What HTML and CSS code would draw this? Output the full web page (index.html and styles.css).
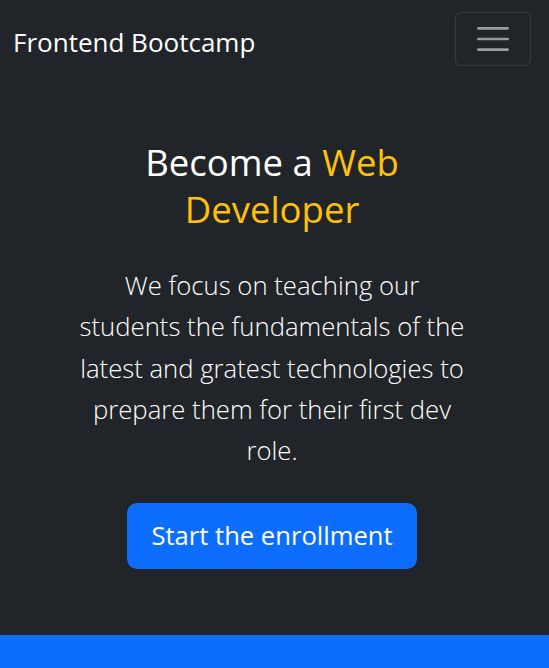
FILE: index.html
```html
<!DOCTYPE html>
<html lang="en">
<head>
<meta charset="utf-8">
<title>Frontend Bootcamp</title>
<link rel="stylesheet" href="styles.css">
</head>
<body>
<nav class="navbar">
  <a class="brand" href="#">Frontend Bootcamp</a>
  <button class="toggler" type="button" aria-label="Toggle navigation">
    <svg class="toggler-icon" viewBox="0 0 30 30" width="40" height="40" aria-hidden="true">
      <path d="M4 7h22M4 15h22M4 23h22" stroke="rgba(255,255,255,0.55)" stroke-width="2" stroke-linecap="round" fill="none"/>
    </svg>
  </button>
</nav>
<section class="hero">
  <h1 class="hero-title">Become a <span class="accent">Web Developer</span></h1>
  <p class="lead">We focus on teaching our students the fundamentals of the latest and gratest technologies to prepare them for their first dev role.</p>
  <a class="btn-primary" href="#">Start the enrollment</a>
</section>
<section class="next"></section>
</body>
</html>
```
FILE: styles.css
```css
* { box-sizing: border-box; }
html, body { margin: 0; padding: 0; }
body {
  background: #212529;
  color: #fff;
  font-family: "Open Sans", "Noto Sans", "Liberation Sans", sans-serif;
}
.navbar {
  display: flex;
  align-items: center;
  justify-content: space-between;
  padding: 12px 18px 9px 13px;
}
.brand {
  color: #fff;
  text-decoration: none;
  font-size: 26px;
  line-height: 1.5;
  font-weight: 400;
  padding-top: 6px;
}
.toggler {
  display: flex;
  align-items: center;
  justify-content: center;
  width: 76px;
  height: 54px;
  padding: 0;
  background: transparent;
  border: 1.33px solid rgba(255,255,255,0.1);
  border-radius: 6px;
}
.toggler-icon { display: block; }
.hero {
  text-align: center;
  padding: 64px 21px 66px 16px;
}
.hero-title {
  margin: 0 auto 32px;
  font-size: 36.5px;
  line-height: 47px;
  font-weight: 400;
  max-width: 300px;
}
.accent { color: #ffc107; }
.lead {
  max-width: 392px;
  margin: 0 auto 32px;
  font-size: 25.7px;
  line-height: 41.25px;
  font-weight: 300;
}
.btn-primary {
  display: inline-block;
  background: #0d6efd;
  color: #fff;
  text-decoration: none;
  font-size: 25.6px;
  line-height: 40px;
  padding: 13px 24px;
  border-radius: 10px;
}
.next {
  background: #0d6efd;
  height: 33px;
}
```
